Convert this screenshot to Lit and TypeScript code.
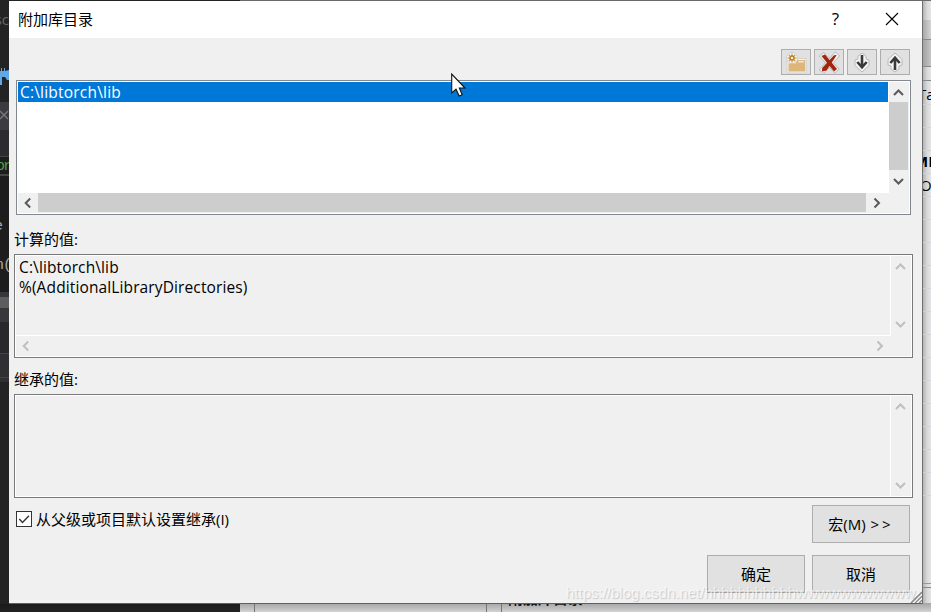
import { LitElement, html, css, svg } from "lit";
import { customElement, property } from "lit/decorators.js";

const chevrons: Record<string, string> = {
  up: "M5 13 L9.5 8.5 L14 13",
  down: "M5 8 L9.5 12.5 L14 8",
  left: "M12.2 5.5 L7.7 10 L12.2 14.5",
  right: "M8.5 5.5 L13 10 L8.5 14.5",
};

@customElement("scroll-arrow")
class ScrollArrow extends LitElement {
  @property() dir = "up";
  static styles = css`
    :host { display: block; width: 20px; height: 20px; flex: none; color: #5a5a5a; }
    :host([disabled]) { color: #bfbfbf; }
    svg { display: block; }
    path { fill: none; stroke: currentColor; stroke-width: 2; }
  `;
  render() {
    return html`<svg width="20" height="20" viewBox="0 0 20 20"><path d=${chevrons[this.dir]}></path></svg>`;
  }
}

@customElement("value-box")
class ValueBox extends LitElement {
  @property({ type: Array }) lines: string[] = [];
  @property({ type: Boolean }) horizontal = false;
  static styles = css`
    :host { display: block; box-sizing: border-box; height: 104px; border: 1px solid #7a7a7a; padding: 1px; background: #fff; }
    .grid { display: grid; height: 100%; grid-template-columns: 1fr 20px; column-gap: 1px; background: #f0f0f0; }
    .text { padding: 1px 3px; line-height: 20px; white-space: pre; border-right: 1px solid #fff; margin-right: -1px; font-size: 15.5px; letter-spacing: .12px; }
    .v { display: flex; flex-direction: column; justify-content: space-between; padding-bottom: 1px; }
    .h { grid-column: 1 / 3; height: 20px; display: flex; justify-content: space-between; padding-right: 22px; box-sizing: border-box; }
    .split { grid-template-rows: 1fr 20px; }
    .split .text { border-bottom: 1px solid #fff; }
    .split .v { padding-bottom: 2px; }
  `;
  render() {
    return html`<div class="grid ${this.horizontal ? "split" : ""}">
      <div class="text">${this.lines.map((l) => html`<div>${l}</div>`)}</div>
      <div class="v"><scroll-arrow dir="up" disabled></scroll-arrow><scroll-arrow dir="down" disabled></scroll-arrow></div>
      ${this.horizontal ? html`<div class="h"><scroll-arrow dir="left" disabled></scroll-arrow><scroll-arrow dir="right" disabled></scroll-arrow></div>` : ""}
    </div>`;
  }
}

const outline = { fill: "#f4f4f4", edge: "#b8b8b8" };
const upIcon = svg`<path d="M14 3 L21 9.5 V15 L18 16 V19 L14 22 L10 19 V16 L7 15 V9.5 Z" fill=${outline.fill} stroke=${outline.edge}/>
  <path d="M14 20 V8" stroke="#3a3a3a" stroke-width="2.6" fill="none"/><path d="M9.3 13 L14 7.8 L18.7 13" stroke="#3a3a3a" stroke-width="2.6" fill="none"/>`;
const folderIcon = svg`
  <path d="M5 11 H12 V8.5 H24 V23 H5 Z" fill="#f4f4f4" stroke="#d0d0d0"/>
  <circle cx="10" cy="8" r="5.5" fill="#f4f4f4" stroke="#d0d0d0"/>
  <path d="M6.5 13.5 H13.5 L15.5 10 H23 V21.5 H6.5 Z" fill="#dcb67a"/>
  <path d="M16.3 11.8 H21.8" stroke="#f4f4f4" stroke-width="1.2"/>
  <path d="M10 3.5 V12.5 M5.5 8 H14.5 M6.8 4.8 L13.2 11.2 M13.2 4.8 L6.8 11.2" stroke="#cf9440" stroke-width="1.1"/>
  <circle cx="10" cy="8" r="2" fill="#f4f4f4" stroke="#c27d1a" stroke-width="1.5"/>`;
const removeIcon = svg`
  <path d="M8.5 6.5 L20 19 M20.5 6 L8.5 19.5" stroke="#bdbdbd" stroke-width="6.6" stroke-linecap="square"/>
  <path d="M8.5 6.5 L20 19 M20.5 6 L8.5 19.5" stroke="#f4f4f4" stroke-width="5" stroke-linecap="square"/>
  <path d="M6.5 6 L10 4.5 L22 19 L19 21.5 Z" fill="#a1260d"/><path d="M21.8 5 L11.5 20.5 L7 21.5 L7.2 18 L19 5.3 Z" fill="#a1260d"/>`;

@customElement("app-root")
class AppRoot extends LitElement {
  static styles = css`
    :host { display: block; position: relative; width: 931px; height: 612px; overflow: hidden; background: #222; color: #000; font: 15px/20px "Open Sans", "Noto Sans CJK SC", sans-serif; }
    .editor { position: absolute; left: 0; top: 0; width: 240px; height: 612px; background: #232323; color: #777; overflow: hidden; }
    .pane { position: absolute; left: 0; width: 9px; overflow: hidden; }
    .tab { top: 102px; height: 54px; background: linear-gradient(#3b3b40 28px, #2c2c30 28px); }
    .code { top: 156px; height: 136px; background: linear-gradient(#454545 1px, #1d1d1d 1px 18px, #454545 18px 20px, #1d1d1d 20px); }
    .bar { top: 292px; height: 30px; background: linear-gradient(#37373c 5px, #5e5e5e 5px 16px, #37373c 16px); }
    .low { top: 322px; height: 60px; background: linear-gradient(#29292c 31px, #444 31px 32px, #303034 32px 55px, #444 55px 56px, #303034 56px); }
    .bit { position: absolute; right: 231px; white-space: nowrap; font-size: 15px; line-height: 20px; }
    .mono { font-family: "Liberation Mono", monospace; color: #aaa; }
    .b-menu { top: 9px; color: #666; }
    .b-or { top: 157px; right: 230px; color: #4d9b42; letter-spacing: -2px; }
    .b-e { top: 217px; right: 237px; }
    .b-n { top: 256px; right: 229px; letter-spacing: -1px; }
    .save { position: absolute; left: 0; top: 68px; }
    .x { position: absolute; left: 0; top: 110px; }
    .shade { position: absolute; left: 0; right: 0; bottom: 0; height: 8px; background: linear-gradient(#1a1a1a, #222); }
    .behind { position: absolute; left: 240px; top: 0; right: 0; bottom: 0; background: #e9e9e9; overflow: hidden; }
    .topline { position: absolute; left: 0; right: 0; top: 0; height: 1px; background: #6a6969; }
    .side { position: absolute; left: 683px; top: 0; width: 8px; height: 612px; background: linear-gradient(90deg, #b4b4b4, #d8d8d8 4px, #e6e6e8); }
    .rows { position: absolute; left: 683px; top: 82px; width: 8px; height: 415px; background: repeating-linear-gradient(transparent 0 22px, #d2d2de 22px 23px); }
    .band { position: absolute; left: 683px; width: 8px; top: 39px; height: 26px; background: linear-gradient(90deg, #a2a2a2, #c6c6c6); border-top: 1px solid #888; border-bottom: 1px solid #888; }
    .band2 { position: absolute; left: 683px; width: 8px; top: 20px; height: 19px; background: linear-gradient(90deg, #a8a8a8, #d4d4d4); }
    .side-line { position: absolute; left: 683px; width: 8px; top: 583px; height: 3px; border-top: 1px solid #999; border-bottom: 1px solid #888; box-sizing: content-box; }
    .side-top { position: absolute; left: 683px; width: 8px; top: 80px; height: 1px; background: #888; }
    .t { position: absolute; white-space: nowrap; }
    .t-ta { top: 84px; left: 678px; }
    .t-mi { top: 151px; left: 674px; font-weight: 700; }
    .t-o { top: 175px; left: 680px; }
    .foot { position: absolute; left: 0; right: 0; top: 603px; height: 9px; background: linear-gradient(#a4a4a4, #d2d2d2); overflow: hidden; }
    .rule { position: absolute; top: 0; width: 1px; height: 9px; background: #70757c; }
    .r0 { left: 14px; } .r1 { left: 246px; } .r2 { left: 261px; }
    .foot b { position: absolute; left: 268px; top: -15px; color: #111; }

    .dialog { position: absolute; left: 9px; top: 1px; width: 914px; height: 603px; box-sizing: border-box; border-right: 1px solid #707070; border-bottom: 1px solid #606060; background: #f0f0f0; display: flex; flex-direction: column; }
    .title { height: 37px; background: #fff; display: flex; align-items: center; padding: 0 23px 2px 9px; box-sizing: border-box; flex: none; }
    .title span { flex: 1; }
    .title svg { display: block; }
    .help { font-size: 17px; margin-right: 46px; }
    .tools { display: flex; justify-content: flex-end; gap: 3px; padding: 11px 12px 5px 0; height: 26px; flex: none; }
    .tool { width: 30px; height: 26px; box-sizing: border-box; border: 1px solid #adadad; background: #e1e1e1; }
    .tool svg { display: block; }
    .list { margin: 0 11px 0 7px; height: 135px; flex: none; box-sizing: border-box; border: 1px solid #828790; background: #fff; padding: 1px; display: grid; grid-template: 111px 20px / 871px 20px; }
    .row { background: #0078d7; color: #fff; height: 20px; width: 870px; padding-left: 2px; box-sizing: border-box; font-size: 15.5px; letter-spacing: .2px; }
    .vbar, .hbar { background: #f0f0f0; display: flex; }
    .vbar { flex-direction: column; }
    .vbar scroll-arrow:last-child { margin-top: 1px; }
    .hbar { grid-column: 1 / 3; }
    .vthumb { height: 68px; background: #cdcdcd; width: 19px; }
    .hthumb { width: 828px; background: #cdcdcd; height: 19px; }
    .label { height: 20px; padding-left: 5px; flex: none; }
    .computed { margin-top: 14px; margin-bottom: 5px; }
    .inherited { margin-top: 11px; margin-bottom: 5px; }
    value-box { margin: 0 9px 0 5px; flex: none; }
    .options { display: flex; justify-content: space-between; padding: 7px 12px 0 7px; }
    .check { display: flex; gap: 4px; height: 28px; align-items: center; }
    .box { width: 16px; height: 16px; box-sizing: border-box; border: 1px solid #333; background: #fff; }
    .box svg { display: block; }
    .btn { width: 98px; height: 38px; box-sizing: border-box; border: 1px solid #adadad; background: #e1e1e1; display: grid; place-items: center; white-space: pre; }
    .gt { letter-spacing: 3px; margin-left: 1px; }
    .actions { display: flex; justify-content: flex-end; gap: 7px; padding: 12px 12px 0 0; }
    .grip { position: absolute; right: 0; bottom: 0; }
    .pointer { position: absolute; left: 451px; top: 73px; }
    .mark { position: absolute; left: 566px; top: 583px; font: 15px/20px "Liberation Sans", sans-serif; color: rgba(255,255,255,.65); text-shadow: 1px 1px 1px rgba(0,0,0,.17); white-space: nowrap; }
  `;
  render() {
    return html`
      <div class="editor">
        <div class="bit b-menu">sc</div>
        <svg class="save" width="9" height="18" viewBox="0 0 9 18"><path d="M0 3 H1 V0 H2 V3 H4 V0 H5 V3 L9 2 V12 H7 L5 9 H2 V17 H0 V11 Z" fill="#62a8e5"/></svg>
        <div class="pane tab"></div>
        <svg class="x" width="9" height="10" viewBox="0 0 9 10"><path d="M0 1 L8 9 M8 1 L0 9" stroke="#77777b" stroke-width="1.4"/></svg>
        <div class="pane code"></div><div class="pane bar"></div><div class="pane low"></div>
        <div class="bit mono b-or">or</div><div class="bit mono b-e">e</div><div class="bit mono b-n">n(</div>
        <div class="shade"></div>
      </div>
      <div class="behind">
        <div class="side"></div><div class="rows"></div><div class="band2"></div><div class="band"></div><div class="side-top"></div><div class="side-line"></div>
        <div class="t t-ta">Ta</div><div class="t t-mi">MI</div><div class="t t-o">O</div>
        <div class="topline"></div>
        <div class="foot"><div class="rule r0"></div><div class="rule r1"></div><div class="rule r2"></div><b>附加库目录</b></div>
      </div>
      <div class="dialog">
        <div class="title"><span>附加库目录</span><div class="help">?</div>
          <svg width="14" height="14" viewBox="0 0 14 14"><path d="M1 1 L13 13 M13 1 L1 13" stroke="#000" stroke-width="1.1"/></svg></div>
        <div class="tools">
          <div class="tool"><svg width="28" height="24" viewBox="0 0 28 24">${folderIcon}</svg></div>
          <div class="tool"><svg width="28" height="24" viewBox="0 0 28 24">${removeIcon}</svg></div>
          <div class="tool"><svg width="28" height="24" viewBox="0 0 28 24"><g transform="rotate(180 14 12.5)">${upIcon}</g></svg></div>
          <div class="tool"><svg width="28" height="24" viewBox="0 0 28 24">${upIcon}</svg></div>
        </div>
        <div class="list">
          <div class="row">C:\\libtorch\\lib</div>
          <div class="vbar"><scroll-arrow dir="up"></scroll-arrow><div class="vthumb"></div><scroll-arrow dir="down"></scroll-arrow></div>
          <div class="hbar"><scroll-arrow dir="left"></scroll-arrow><div class="hthumb"></div><scroll-arrow dir="right"></scroll-arrow></div>
        </div>
        <div class="label computed">计算的值:</div>
        <value-box horizontal .lines=${["C:\\libtorch\\lib", "%(AdditionalLibraryDirectories)"]}></value-box>
        <div class="label inherited">继承的值:</div>
        <value-box></value-box>
        <div class="options"><div class="check"><div class="box"><svg width="14" height="14" viewBox="0 0 14 14"><path d="M2.3 7 L5.5 10.5 L12 3.8" fill="none" stroke="#333" stroke-width="1.4"/></svg></div>从父级或项目默认设置继承(I)</div>
          <div class="btn"><div>宏(M) <span class="gt">&gt;&gt;</span></div></div></div>
        <div class="actions"><div class="btn">确定</div><div class="btn">取消</div></div>
        <svg class="grip" width="12" height="12" viewBox="0 0 12 12"><path d="M1 12 L12 1 M5 12 L12 5 M9 12 L12 9" stroke="#8a8a8a" stroke-width="1.6"/><path d="M0 11 L11 0 M3.5 12 L12 3.5 M7.5 12 L12 7.5" stroke="#fff" stroke-width=".8"/></svg>
      </div>
      <div class="mark">https://blog.csdn.net/hhhhhhhhhhhwwwwwwwwwww</div>
      <svg class="pointer" width="16" height="25" viewBox="0 0 16 25"><path d="M.7 1 V20 L5 16.2 L8.2 23 L11.2 21.8 L8.3 15 H14 Z" fill="#fff" stroke="#111" stroke-width="1.1"/></svg>
    `;
  }
}
